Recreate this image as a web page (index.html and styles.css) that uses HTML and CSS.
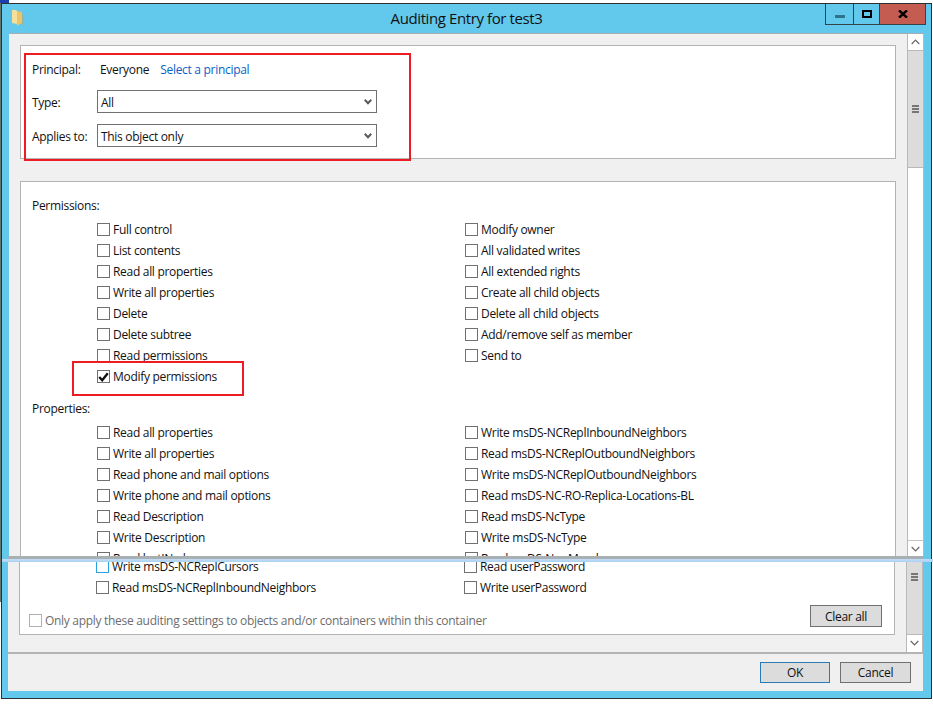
FILE: index.html
```html
<!DOCTYPE html>
<html lang="en">
<head>
<meta charset="utf-8">
<title>Auditing Entry for test3</title>
<link rel="stylesheet" href="styles.css">
</head>
<body>
<div class="desktop-corner"></div>
<div class="desktop-edge"></div>
<div class="window">
  <header class="titlebar">
    <svg class="folder" width="12" height="16" viewBox="0 0 12 16"><path d="M9 4l3 1v9l-3 1z" fill="#9fb59a"/><path d="M0 0h4l1 1v13l-5-1z" fill="#f5df9a"/><path d="M5 1l5 1v11l-5 3z" fill="#e8c56c"/></svg>
    <h1 class="title">Auditing Entry for test3</h1>
    <div class="controls">
      <button class="ctl ctl-min"><span class="min-glyph"></span></button>
      <button class="ctl ctl-max"><span class="max-glyph"></span></button>
      <button class="ctl ctl-close"><svg width="10" height="8" viewBox="0 0 10 8"><path d="M1 .3l8 7.4M9 .3l-8 7.4" stroke="#000" stroke-width="2.4" fill="none"/></svg></button>
    </div>
  </header>

  <div class="upper">
    <main class="content">
      <section class="panel panel-head">
        <div class="field field-principal"><span class="label">Principal:</span><span class="value">Everyone</span><a class="link">Select a principal</a></div>
        <div class="field field-type"><span class="label label-low">Type:</span><div class="select"><span>All</span><svg width="8" height="6" viewBox="0 0 8 6"><path d="M.8 .8L4 4.2 7.2 .8" stroke="#5a5a5a" stroke-width="2" fill="none"/></svg></div></div>
        <div class="field field-applies"><span class="label label-low">Applies to:</span><div class="select"><span>This object only</span><svg width="8" height="6" viewBox="0 0 8 6"><path d="M.8 .8L4 4.2 7.2 .8" stroke="#5a5a5a" stroke-width="2" fill="none"/></svg></div></div>
      </section>
      <section class="panel panel-perms">
        <div class="heading">Permissions:</div>
        <div class="rows">
          <label class="row"><i class="box"></i>Full control</label><label class="row"><i class="box"></i>Modify owner</label>
          <label class="row"><i class="box"></i>List contents</label><label class="row"><i class="box"></i>All validated writes</label>
          <label class="row"><i class="box"></i>Read all properties</label><label class="row"><i class="box"></i>All extended rights</label>
          <label class="row"><i class="box"></i>Write all properties</label><label class="row"><i class="box"></i>Create all child objects</label>
          <label class="row"><i class="box"></i>Delete</label><label class="row"><i class="box"></i>Delete all child objects</label>
          <label class="row"><i class="box"></i>Delete subtree</label><label class="row"><i class="box"></i>Add/remove self as member</label>
          <label class="row"><i class="box"></i>Read permissions</label><label class="row"><i class="box"></i>Send to</label>
          <label class="row"><i class="box"><svg width="11" height="10" viewBox="0 0 11 10"><path d="M1.2 5l3 3.2L9.8 1.2" stroke="#111" stroke-width="2.4" fill="none"/></svg></i>Modify permissions</label><span></span>
        </div>
        <div class="heading heading-props">Properties:</div>
        <div class="rows">
          <label class="row"><i class="box"></i>Read all properties</label><label class="row"><i class="box"></i>Write msDS-NCReplInboundNeighbors</label>
          <label class="row"><i class="box"></i>Write all properties</label><label class="row"><i class="box"></i>Read msDS-NCReplOutboundNeighbors</label>
          <label class="row"><i class="box"></i>Read phone and mail options</label><label class="row"><i class="box"></i>Write msDS-NCReplOutboundNeighbors</label>
          <label class="row"><i class="box"></i>Write phone and mail options</label><label class="row"><i class="box"></i>Read msDS-NC-RO-Replica-Locations-BL</label>
          <label class="row"><i class="box"></i>Read Description</label><label class="row"><i class="box"></i>Read msDS-NcType</label>
          <label class="row"><i class="box"></i>Write Description</label><label class="row"><i class="box"></i>Write msDS-NcType</label>
          <label class="row"><i class="box"></i>Read lastINcd</label><label class="row"><i class="box"></i>Read msDS-NonMembers</label>
        </div>
      </section>
    </main>
    <div class="scrollbar">
      <div class="sb-btn"><svg width="9" height="6" viewBox="0 0 9 6"><path d="M.7 5l3.8-3.8L8.3 5" stroke="#666" stroke-width="1.2" fill="none"/></svg></div>
      <div class="sb-thumb sb-thumb-upper"><span class="grip"></span></div>
      <div class="sb-track"></div>
      <div class="sb-btn sb-btn-bottom"><svg width="9" height="6" viewBox="0 0 9 6"><path d="M.7 1l3.8 3.8L8.3 1" stroke="#666" stroke-width="1.2" fill="none"/></svg></div>
    </div>
  </div>

  <div class="seam"><div class="seam-grey"></div><div class="seam-blue"></div></div>

  <div class="lower">
    <div class="lower-main">
      <div class="content-lower">
        <section class="panel panel-rest">
          <div class="rows rows-rest">
            <label class="row"><i class="box box-focus"></i>Write msDS-NCReplCursors</label><label class="row"><i class="box"></i>Read userPassword</label>
            <label class="row"><i class="box"></i>Read msDS-NCReplInboundNeighbors</label><label class="row"><i class="box"></i>Write userPassword</label>
          </div>
          <div class="only-row">
            <label class="row row-disabled"><i class="box box-disabled"></i>Only apply these auditing settings to objects and/or containers within this container</label>
            <button class="btn btn-clear">Clear all</button>
          </div>
        </section>
      </div>
      <div class="scrollbar">
        <div class="sb-thumb sb-thumb-lower"><span class="grip"></span></div>
        <div class="sb-btn"><svg width="9" height="6" viewBox="0 0 9 6"><path d="M.7 1l3.8 3.8L8.3 1" stroke="#666" stroke-width="1.2" fill="none"/></svg></div>
      </div>
    </div>
    <footer class="footer">
      <button class="btn btn-ok">OK</button>
      <button class="btn btn-cancel">Cancel</button>
    </footer>
  </div>
</div>
<div class="callout callout-head"></div>
<div class="callout callout-modify"></div>
</body>
</html>
```
FILE: styles.css
```css
* { box-sizing: border-box; }
html, body { margin: 0; padding: 0; background: #fff; }
body { position: relative; width: 933px; height: 707px; overflow: hidden; padding: 3px 0 0 1px; font: 12px "Open Sans", "Liberation Sans", sans-serif; color: #111; letter-spacing: -.3px; }
.desktop-corner { position: absolute; left: 0; top: 0; width: 9px; height: 3px; background: #1c3fae; }
.desktop-edge { position: absolute; left: 0; top: 3px; width: 1px; height: 599px; background: #66756c; }
.window { width: 931px; height: 696px; background: #62c8ec; border: 1px solid #2b3035; display: flex; flex-direction: column; }
.titlebar { height: 29px; flex: none; position: relative; }
.folder { position: absolute; left: 10px; top: 6px; }
.title { margin: 0; text-align: center; font-size: 15px; font-weight: 400; line-height: 29px; color: #111; letter-spacing: -.4px; }
.controls { position: absolute; right: 5px; top: 0; display: flex; height: 21px; border: 1px solid #35424c; border-top: 0; }
.ctl { margin: 0; padding: 0; border: 0; background: none; display: flex; align-items: center; justify-content: center; height: 20px; }
.ctl-min { width: 28px; border-right: 1px solid #35424c; }
.ctl-max { width: 26px; border-right: 1px solid #35424c; }
.ctl-close { width: 45px; background: #c45c52; }
.min-glyph { width: 10px; height: 3px; background: #2f728c; margin-top: 5px; }
.max-glyph { width: 10px; height: 8px; border: 2px solid #000; }
.upper { height: 523px; flex: none; margin: 0 7px; display: flex; overflow: hidden; border-top: 1px solid #a7adb0; background: #f0f0f0; }
.content { width: 898px; padding: 11px 11px 0; flex: none; }
.panel { background: #fff; border: 1px solid #b4b4b4; }
.panel-head { height: 114px; padding: 14px 0 0 11px; display: flex; flex-direction: column; }
.field { display: flex; align-items: center; }
.field-principal { height: 18px; }
.field-type { height: 23px; margin-top: 12px; }
.field-applies { height: 23px; margin-top: 11px; }
.label { width: 65px; flex: none; }
.label-low { padding-top: 2px; }
.value { margin: 0 11px 0 3px; }
.link { color: #0a62c8; }
.select { display: flex; align-items: center; justify-content: space-between; width: 280px; height: 23px; border: 1px solid #707070; padding: 1px 4px 0 3px; }
.panel-perms { margin-top: 22px; height: 400px; padding: 16px 0 0 11px; }
.heading { height: 16px; line-height: 16px; }
.heading-props { margin-top: 14px; }
.rows { display: grid; grid-template-columns: 368px 1fr; grid-auto-rows: 21px; padding: 5px 0 0 65px; }
.row { display: flex; align-items: center; white-space: nowrap; }
.box { width: 13px; height: 13px; border: 1px solid #707070; margin-right: 3px; background: #fff; flex: none; display: flex; align-items: center; justify-content: center; }
.box-focus { border-color: #2aa0e0; }
.box-disabled { border-color: #b0b0b0; }
.row-disabled { color: #6d6d6d; height: 22px; margin-top: 4px; }
.scrollbar { flex: none; width: 17px; display: flex; flex-direction: column; border: solid #b9b9b9; border-width: 0 1px; background: #fff; }
.sb-btn { height: 16px; flex: none; display: flex; align-items: center; justify-content: center; background: #fff; }
.sb-btn-bottom { border-top: 1px solid #c4c4c4; }
.sb-thumb { background: #dcdcdc; flex: none; display: flex; justify-content: center; border: solid #b9b9b9; border-width: 1px 0; }
.sb-thumb-upper { height: 118px; padding-top: 54px; }
.sb-track { flex: 1; }
.sb-thumb-lower { height: 73px; border-top: 0; padding-top: 11px; }
.grip { width: 7px; height: 8px; background: repeating-linear-gradient(#777 0 2px, transparent 2px 3px); }
.seam { height: 6px; flex: none; margin-right: -2px; position: relative; z-index: 1; }
.seam-grey { height: 3px; margin: 0 9px 0 6px; background: #a9b0b4; }
.seam-blue { height: 3px; background: linear-gradient(#c8dcf5, #a6d2f3); }
.lower { flex: 1; margin: 0 8px 7px 6px; background: #f0f0f0; display: flex; flex-direction: column; }
.lower-main { height: 92px; flex: none; display: flex; border-bottom: 2px solid #b4b4b4; }
.content-lower { padding: 0 11px; width: 898px; flex: none; }
.panel-rest { height: 79px; border-top: 0; padding: 0 12px 0 11px; }
.rows-rest { padding: 0 0 0 65px; margin-top: -6px; }
.only-row { display: flex; justify-content: space-between; align-items: flex-start; margin: 7px 0 0 -2px; height: 22px; }
.btn { font: inherit; letter-spacing: inherit; color: #111; background: #dcdcdc; border: 1px solid #707070; padding: 0; height: 21px; }
.btn-clear { width: 72px; height: 22px; }
.footer { flex: 1; display: flex; justify-content: flex-end; gap: 10px; padding: 8px 12px 0 0; }
.btn-ok { width: 70px; border-color: #2a7ab8; }
.btn-cancel { width: 71px; }
.callout { position: absolute; border: 2px solid #ed1c24; }
.callout-head { left: 24px; top: 53px; width: 387px; height: 108px; }
.callout-modify { left: 72px; top: 361px; width: 172px; height: 35px; }
```
